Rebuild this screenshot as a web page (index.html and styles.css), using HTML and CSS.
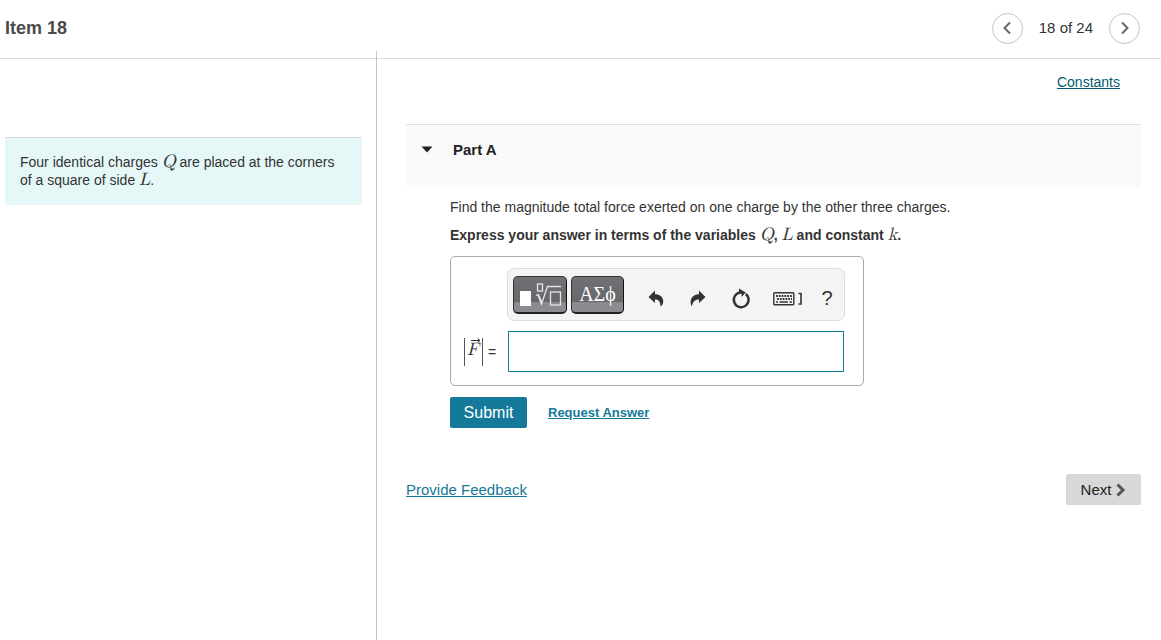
FILE: index.html
```html
<!DOCTYPE html>
<html lang="en">
  <head>
    <meta charset="UTF-8" />
    <meta name="viewport" content="width=device-width, initial-scale=1.0" />
    <title>Item 18</title>
    <link rel="stylesheet" href="styles.css">
  </head>
  <body>
    <header class="top">
      <h1>Item 18</h1>
      <nav class="pager">
        <button class="round" aria-label="Previous item">
          <svg width="10" height="14" viewBox="0 0 10 14"><path d="M8 1.5L2.5 7L8 12.5" /></svg>
        </button>
        <span>18 of 24</span>
        <button class="round" aria-label="Next item">
          <svg width="10" height="14" viewBox="0 0 10 14"><path d="M2 1.5L7.5 7L2 12.5" /></svg>
        </button>
      </nav>
    </header>
    <div class="columns">
      <aside class="problem">
        <p class="intro">Four identical charges <i class="var">Q</i> are placed at the corners of a square of side <i class="var">L</i>.</p>
      </aside>
      <main class="content">
        <div class="links"><a href="#">Constants</a></div>
        <section>
          <div class="part-head">
            <svg width="12" height="7" viewBox="0 0 12 7"><path d="M0.5 0.5H11.5L6 6.5Z" fill="#222" /></svg>
            <h2>Part A</h2>
          </div>
          <div class="part-body">
            <p>Find the magnitude total force exerted on one charge by the other three charges.</p>
            <p class="express">Express your answer in terms of the variables <i class="var">Q</i>, <i class="var">L</i> and constant <i class="var">k</i>.</p>
            <div class="answer-box">
              <div class="toolbar">
                <button class="dark templates" aria-label="Templates">
                  <svg width="44" height="28" viewBox="0 0 44 28">
                    <rect x="2" y="11" width="11" height="15" fill="#fff" />
                    <g fill="none" stroke="#e4e4e4" stroke-width="1.3">
                      <rect x="19.5" y="4" width="5" height="7" />
                      <path d="M18 15.5L20 14.5L23.5 24L29.5 6.5H43" />
                      <path d="M20.5 15L23.5 23" stroke-width="2" />
                      <rect x="32.5" y="12" width="10" height="13" />
                    </g>
                  </svg>
                </button>
                <button class="dark greek">ΑΣϕ</button>
                <button class="tool undo" aria-label="Undo">
                  <svg width="16" height="18" viewBox="0 0 16 18"><path d="M7 0.5L0.5 7L7 13V9.5C10.5 9.3 12.5 11.5 12.5 16.5C14.2 15.5 15.5 13.5 15.2 10.8C14.7 6.5 11.5 4.2 7 4.2Z" /></svg>
                </button>
                <button class="tool redo" aria-label="Redo">
                  <svg width="16" height="18" viewBox="0 0 16 18"><path d="M9 0.5L15.5 7L9 13V9.5C5.5 9.3 2.5 11.5 2 16.5C0.7 14.5 0.3 12.5 0.8 10.3C1.8 6.5 4.5 4.2 9 4.2Z" /></svg>
                </button>
                <button class="tool reset" aria-label="Reset">
                  <svg width="20" height="22" viewBox="0 0 20 22">
                    <path d="M9 4.5A7.4 7.4 0 1 0 14.8 6" fill="none" stroke="#333" stroke-width="2.4" />
                    <path d="M8 0.5L14.8 4.5L10.5 9V5.8H8Z" />
                  </svg>
                </button>
                <button class="tool keys" aria-label="Keyboard shortcuts">
                  <svg width="30" height="16" viewBox="0 0 30 16">
                    <rect x="0.8" y="1.8" width="20" height="12" rx="1" fill="none" stroke="#333" stroke-width="1.4" />
                    <path d="M3 5H19M4 8H19" fill="none" stroke="#333" stroke-width="1.8" stroke-dasharray="1.8 1" />
                    <path d="M3 11H5M6.5 11H15M16.5 11H19" fill="none" stroke="#333" stroke-width="1.6" />
                    <path d="M25.5 2.5H28V13H25.5" fill="none" stroke="#333" stroke-width="1.6" />
                  </svg>
                </button>
                <button class="tool help" aria-label="Help">?</button>
              </div>
              <div class="answer-row">
                <label for="answer">
                  <span class="abs"><i class="var">F</i><svg class="arrow" width="10" height="5" viewBox="0 0 10 5"><path d="M0 2.5H9M6.5 0.5L9 2.5L6.5 4.5" fill="none" stroke="#333" /></svg></span>
                  <span>=</span>
                </label>
                <input type="text" id="answer" />
              </div>
            </div>
            <div class="actions">
              <button class="submit">Submit</button>
              <a href="#">Request Answer</a>
            </div>
          </div>
        </section>
        <footer class="bottom">
          <a href="#">Provide Feedback</a>
          <button class="next">Next
            <svg width="10" height="14" viewBox="0 0 10 14"><path d="M1.5 1.5L7 7L1.5 12.5" /></svg>
          </button>
        </footer>
      </main>
    </div>
  </body>
</html>
```

FILE: styles.css
```css
* {
  box-sizing: border-box;
}
body {
  margin: 0;
  min-height: 100vh;
  display: flex;
  flex-direction: column;
  font-family: "Liberation Sans", Arial, sans-serif;
  font-size: 14px;
  line-height: 18px;
  color: #333;
  background: white;
}
h1,
h2,
p {
  margin: 0;
}
button {
  font-family: inherit;
  padding: 0;
  border: none;
  cursor: pointer;
}
a {
  color: #157a9a;
}
.var {
  font-family: "Latin Modern Math", "Liberation Serif", serif;
  font-size: 18px;
  font-weight: normal;
  line-height: 16px;
}

/* header */
.top {
  display: flex;
  justify-content: space-between;
  align-items: center;
  height: 59px;
  padding: 0 21px 2px 5px;
  border-bottom: 1px solid #ddd;
}
.top h1 {
  font-size: 18px;
  color: #4a4a4a;
}
.pager {
  display: flex;
  align-items: center;
  gap: 16px;
  font-size: 15px;
}
.round {
  display: flex;
  align-items: center;
  justify-content: center;
  width: 31px;
  height: 31px;
  border: 1px solid #c4c4c4;
  border-radius: 50%;
  background: white;
}
.round path {
  fill: none;
  stroke: #666;
  stroke-width: 2;
}

/* columns */
.columns {
  flex: 1;
  display: flex;
}
.problem {
  flex: 0 0 377px;
  margin-top: -8px;
  padding: 86px 14px 0 5px;
  border-right: 1px solid #b5c7d8;
}
.intro {
  padding: 15px 15px 16px;
  line-height: 17px;
  border-top: 1px solid #d5dddd;
  background: #e6f7f7;
}
.content {
  flex: 1;
  padding: 14px 20px 0 29px;
}
.links {
  padding-right: 21px;
  text-align: right;
}
.links a {
  color: #005a70;
}
.part-head {
  display: flex;
  gap: 20px;
  height: 63px;
  margin-top: 33px;
  padding: 16px 15px;
  border-top: 1px solid #ddd;
  background: #f9f9f9;
}
.part-head svg {
  margin-top: 5px;
}
.part-head h2 {
  font-size: 15px;
  line-height: 18px;
  color: #222;
}
.part-body {
  padding: 11px 0 0 44px;
}
.express {
  margin-top: 10px;
  font-weight: bold;
}

/* answer */
.answer-box {
  max-width: 414px;
  margin-top: 12px;
  padding: 11px 19px 13px 12px;
  border: 1px solid #aaa;
  border-radius: 5px;
}
.toolbar {
  display: flex;
  align-items: center;
  gap: 4px;
  height: 53px;
  margin: 0 -1px 0 44px;
  padding: 0 5px;
  border: 1px solid #ddd;
  border-radius: 7px;
  background: #f4f4f4;
}
.dark {
  display: flex;
  align-items: center;
  justify-content: center;
  width: 54px;
  height: 38px;
  border: 1px solid #333;
  border-right-color: #111;
  border-bottom: 2px solid #222;
  border-radius: 5px;
  color: white;
  background: linear-gradient(#707174, #67686b 72%, #8b8b92 73%);
}
.greek {
  font-family: "Liberation Serif", serif;
  font-size: 20px;
}
.tool {
  display: flex;
  justify-content: center;
  width: 39px;
  margin-top: 8px;
  background: none;
  color: #333;
}
.tool path {
  fill: #333;
}
.tool path[fill="none"] {
  fill: none;
}
.undo {
  margin-left: 8px;
}
.keys {
  width: 47px;
}
.help {
  width: 24px;
  font-size: 20px;
}
.answer-row {
  display: flex;
  align-items: center;
  margin-top: 10px;
}
.answer-row label {
  display: flex;
  align-items: center;
  gap: 5px;
  flex: 0 0 45px;
  padding-left: 1px;
}
.abs {
  position: relative;
  width: 19px;
  height: 28px;
  padding-left: 2px;
  line-height: 24px;
  border: solid #555;
  border-width: 0 1px;
}
.arrow {
  position: absolute;
  top: 0;
  left: 6px;
}
.answer-row input {
  flex: 1;
  min-width: 0;
  height: 41px;
  padding: 0 8px;
  font-size: 16px;
  border: 1px solid #157a9a;
}
.actions {
  display: flex;
  align-items: center;
  gap: 21px;
  margin-top: 11px;
}
.actions a {
  font-size: 13px;
  font-weight: bold;
}
.submit {
  width: 77px;
  height: 31px;
  font-size: 16px;
  color: white;
  background: #157a9a;
  border-radius: 2px;
}

/* footer */
.bottom {
  display: flex;
  justify-content: space-between;
  align-items: center;
  margin-top: 46px;
  font-size: 15px;
}
.next {
  display: flex;
  align-items: center;
  justify-content: center;
  gap: 5px;
  width: 75px;
  height: 31px;
  font-size: 15px;
  color: #222;
  background: #d8d8d8;
  border-radius: 2px;
}
.next path {
  fill: none;
  stroke: #555;
  stroke-width: 3;
}
```
